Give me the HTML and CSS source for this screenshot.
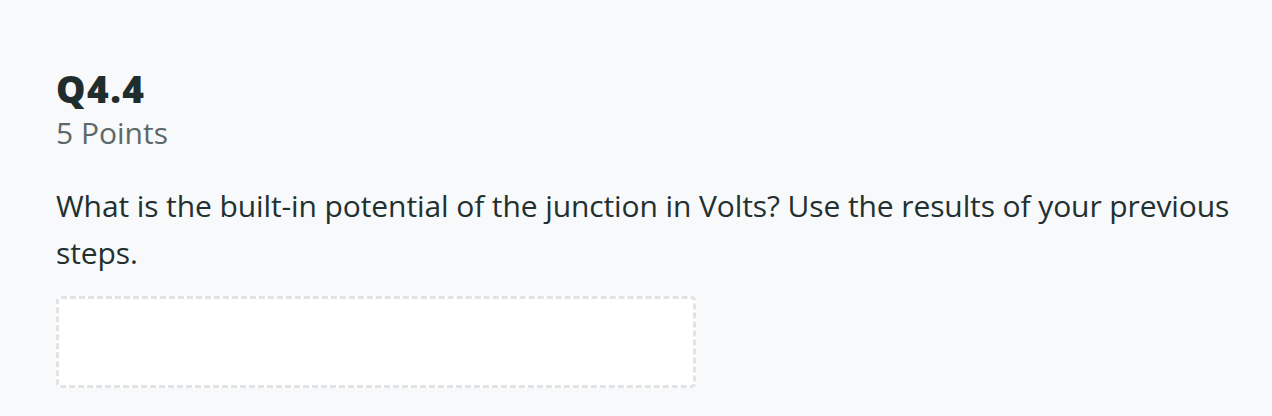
FILE: index.html
```html
<!DOCTYPE html>
<html>
<head>
<meta charset="utf-8">
<link rel="stylesheet" href="styles.css">
</head>
<body>
<div class="question">
  <div class="q-title">Q4.4</div>
  <div class="q-points">5 Points</div>
  <p class="q-text">What is the built-in potential of the junction in Volts? Use the results of your previous steps.</p>
  <div class="answer-box"></div>
</div>
</body>
</html>
```
FILE: styles.css
```css
html, body {
  margin: 0;
  padding: 0;
  background: #f8f9fa;
}
body {
  font-family: "Open Sans", Lato, sans-serif;
  color: #223030;
}
.question {
  padding: 66px 30px 0 56px;
}
.q-title {
  font-size: 37px;
  font-weight: 800;
  line-height: 46px;
  letter-spacing: 1.5px;
  color: #1f2d2d;
}
.q-points {
  margin-top: 3px;
  font-size: 30px;
  line-height: 36px;
  color: #5d6868;
}
.q-text {
  margin: 31px 0 0 0;
  font-size: 30px;
  line-height: 47px;
  letter-spacing: -0.1px;
}
.answer-box {
  margin-top: 20px;
  width: 634px;
  height: 86px;
  background: #fff;
  border: 3px dashed #e1e3e5;
  border-radius: 5px;
}
```
